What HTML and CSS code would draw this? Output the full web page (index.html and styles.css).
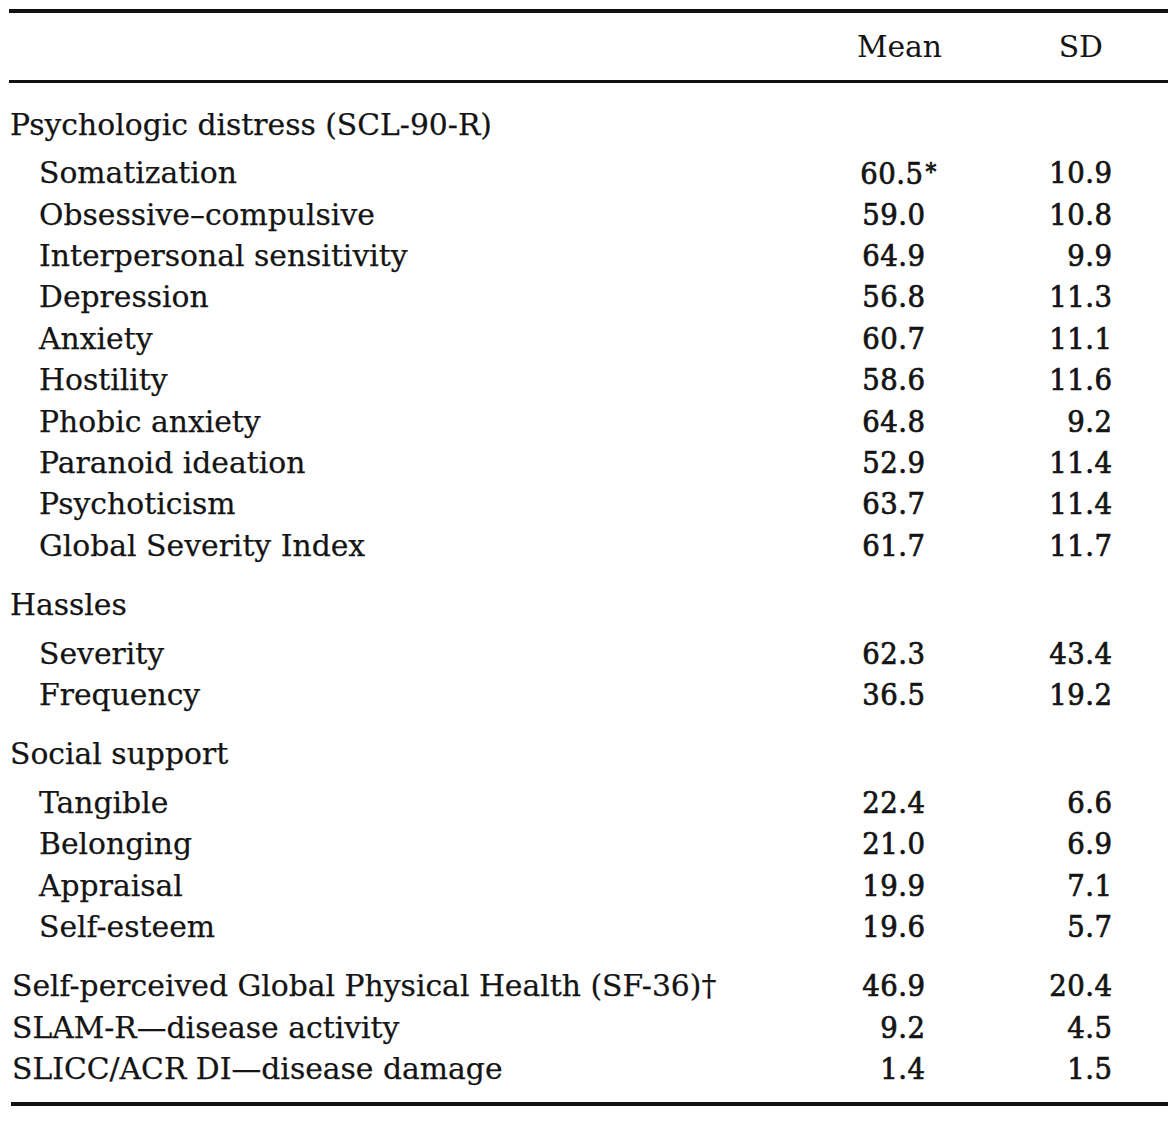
FILE: index.html
```html
<!DOCTYPE html>
<html lang="en">
<head>
<meta charset="utf-8">
<title>Table</title>
<link rel="stylesheet" href="styles.css">
</head>
<body>
<div class="table">
  <div class="rule rule-top"></div>
  <div class="row head">
    <span class="label"></span>
    <span class="h-mean">Mean</span>
    <span class="h-sd">SD</span>
  </div>
  <div class="rule rule-mid"></div>

  <div class="body">
    <div class="group">
      <div class="row section"><span class="label">Psychologic distress (SCL-90-R)</span></div>
      <div class="row item"><span class="label">Somatization</span><span class="num">60.5<span class="note">*</span></span><span class="num">10.9</span></div>
      <div class="row item"><span class="label">Obsessive–compulsive</span><span class="num">59.0</span><span class="num">10.8</span></div>
      <div class="row item"><span class="label">Interpersonal sensitivity</span><span class="num">64.9</span><span class="num">9.9</span></div>
      <div class="row item"><span class="label">Depression</span><span class="num">56.8</span><span class="num">11.3</span></div>
      <div class="row item"><span class="label">Anxiety</span><span class="num">60.7</span><span class="num">11.1</span></div>
      <div class="row item"><span class="label">Hostility</span><span class="num">58.6</span><span class="num">11.6</span></div>
      <div class="row item"><span class="label">Phobic anxiety</span><span class="num">64.8</span><span class="num">9.2</span></div>
      <div class="row item"><span class="label">Paranoid ideation</span><span class="num">52.9</span><span class="num">11.4</span></div>
      <div class="row item"><span class="label">Psychoticism</span><span class="num">63.7</span><span class="num">11.4</span></div>
      <div class="row item"><span class="label">Global Severity Index</span><span class="num">61.7</span><span class="num">11.7</span></div>
    </div>

    <div class="group">
      <div class="row section"><span class="label">Hassles</span></div>
      <div class="row item"><span class="label">Severity</span><span class="num">62.3</span><span class="num">43.4</span></div>
      <div class="row item"><span class="label">Frequency</span><span class="num">36.5</span><span class="num">19.2</span></div>
    </div>

    <div class="group">
      <div class="row section"><span class="label">Social support</span></div>
      <div class="row item"><span class="label">Tangible</span><span class="num">22.4</span><span class="num">6.6</span></div>
      <div class="row item"><span class="label">Belonging</span><span class="num">21.0</span><span class="num">6.9</span></div>
      <div class="row item"><span class="label">Appraisal</span><span class="num">19.9</span><span class="num">7.1</span></div>
      <div class="row item"><span class="label">Self-esteem</span><span class="num">19.6</span><span class="num">5.7</span></div>
    </div>

    <div class="group">
      <div class="row top"><span class="label">Self-perceived Global Physical Health (SF-36)†</span><span class="num">46.9</span><span class="num">20.4</span></div>
      <div class="row top"><span class="label">SLAM-R—disease activity</span><span class="num">9.2</span><span class="num">4.5</span></div>
      <div class="row top"><span class="label">SLICC/ACR DI—disease damage</span><span class="num">1.4</span><span class="num">1.5</span></div>
    </div>
  </div>

  <div class="rule rule-bottom"></div>
</div>
</body>
</html>
```
FILE: styles.css
```css
html, body {
  margin: 0;
  padding: 0;
  background: #ffffff;
}

body {
  color: #141414;
  font-family: "DejaVu Serif", "Liberation Serif", serif;
  font-size: 29.8px;
}

.table {
  width: 1168px;
  padding-top: 9px;
}

.rule {
  background: #111111;
}

.rule-top {
  margin-left: 9px;
  height: 4px;
}

.rule-mid {
  margin-left: 9px;
  height: 3px;
}

.rule-bottom {
  margin-left: 11px;
  margin-top: 13px;
  height: 4px;
}

.row {
  display: grid;
  grid-template-columns: 1fr 125px 187px;
  padding: 0 56px 0 10px;
  line-height: 41.4px;
  height: 41.4px;
  white-space: nowrap;
}

.head {
  padding-top: 13px;
  padding-bottom: 12.5px;
}

.h-mean,
.h-sd {
  text-align: right;
}

.h-mean {
  margin-right: -17px;
}

.h-sd {
  padding-right: 9px;
}

.body {
  padding-top: 21px;
}

.group + .group {
  margin-top: 18px;
}

.section {
  margin-bottom: 7px;
}

.item .label {
  padding-left: 29px;
}

.top .label {
  padding-left: 2px;
}

.label {
  -webkit-text-stroke: 0.25px currentColor;
}

.num {
  text-align: right;
  font-family: "DejaVu Serif Condensed", "DejaVu Serif", serif;
  font-stretch: condensed;
  font-size: 30.6px;
  letter-spacing: 0.5px;
  margin-right: -0.5px;
  -webkit-text-stroke: 0.7px currentColor;
}

.note {
  display: inline-block;
  width: 0;
  text-align: left;
  overflow: visible;
  font-size: 24px;
  vertical-align: 4px;
  padding-left: 2px;
  letter-spacing: 0;
}
```
